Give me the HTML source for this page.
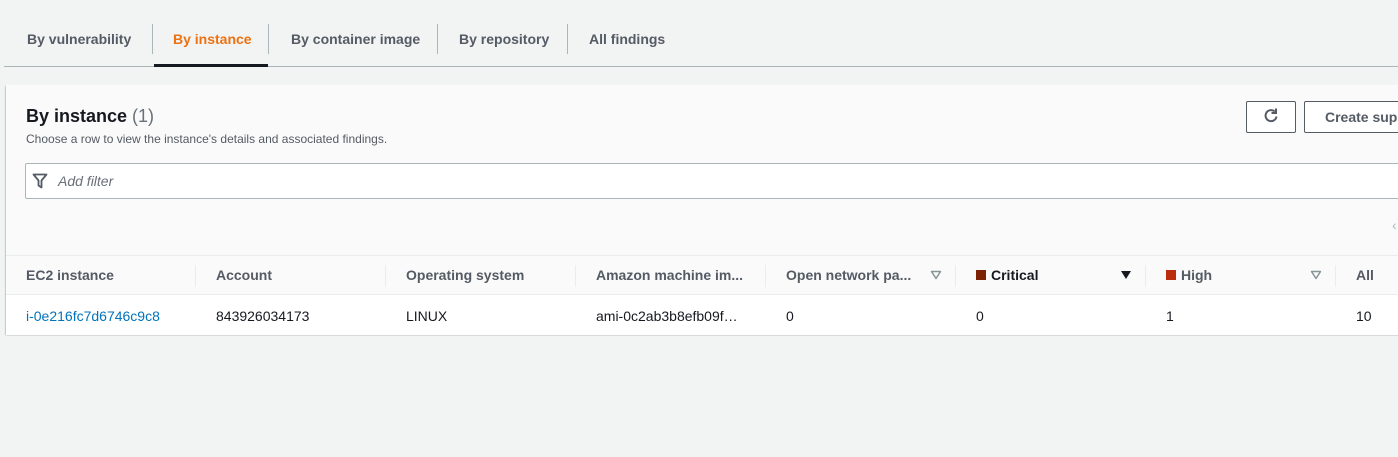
<!DOCTYPE html>
<html><head><style>
body{margin:0;width:1398px;height:457px;background:#f2f3f3;font-family:"Liberation Sans",sans-serif;overflow:hidden;position:relative;color:#16191f}
.tab{position:absolute;top:31px;font-size:14px;font-weight:bold;color:#545b64}
.sep{position:absolute;top:24px;width:1px;height:30px;background:#aab7b8}
.panel{position:absolute;left:6px;top:85px;width:1400px;height:249px;background:#fafafa;box-shadow:0 1px 1px rgba(0,28,36,.3),1px 1px 1px rgba(0,28,36,.15),-1px 1px 1px rgba(0,28,36,.15)}
.abs{position:absolute}
.th{position:absolute;top:267px;font-size:14px;font-weight:bold;color:#545b64}
.td{position:absolute;top:308px;font-size:14px;color:#16191f}
.cs{position:absolute;top:265px;width:1px;height:22px;background:#eaeded}
.tri{position:absolute;top:270px}
</style></head><body>
<div class="tab" style="left:27px">By vulnerability</div>
<div class="sep" style="left:152px"></div>
<div class="tab" style="left:173px;color:#ec7211">By instance</div>
<div class="sep" style="left:268px"></div>
<div class="tab" style="left:291px">By container image</div>
<div class="sep" style="left:437px"></div>
<div class="tab" style="left:459px">By repository</div>
<div class="sep" style="left:567px"></div>
<div class="tab" style="left:589px">All findings</div>
<div class="abs" style="left:4px;top:66px;width:1394px;height:1px;background:#aab7b8"></div>
<div class="abs" style="left:154px;top:64px;width:114px;height:3px;background:#16191f"></div>

<div class="panel"></div>
<div class="abs" style="left:26px;top:106px;font-size:18px;font-weight:bold">By instance <span style="font-weight:normal;color:#687078">(1)</span></div>
<div class="abs" style="left:26px;top:132px;font-size:12px;color:#545b64">Choose a row to view the instance's details and associated findings.</div>
<div class="abs" style="left:1246px;top:101px;width:48px;height:30px;border:1px solid #545b64;border-radius:2px;background:#fff"></div>
<svg class="abs" style="left:1261px;top:106px" width="20" height="20" viewBox="0 0 20 20"><path d="M15.5 10.5a5.5 5.5 0 1 1-1.8-5" fill="none" stroke="#545b64" stroke-width="2"/><path d="M15 2.5v4.5h-4.5" fill="none" stroke="#545b64" stroke-width="2"/></svg>
<div class="abs" style="left:1304px;top:101px;width:120px;height:30px;border:1px solid #545b64;border-radius:2px;background:#fff"></div>
<div class="abs" style="left:1325px;top:109px;font-size:14px;font-weight:bold;color:#545b64">Create sup</div>
<div class="abs" style="left:25px;top:163px;width:1400px;height:34px;border:1px solid #aab7b8;border-radius:2px;background:#fff"></div>
<svg class="abs" style="left:32px;top:173px" width="16" height="16" viewBox="0 0 16 16"><path d="M1.5 1.5h13l-5 6v7l-3-2v-5z" fill="none" stroke="#545b64" stroke-width="1.8" stroke-linejoin="round"/></svg>
<div class="abs" style="left:58px;top:173px;font-size:14px;font-style:italic;color:#687078">Add filter</div>
<div class="abs" style="left:1392px;top:217px;font-size:14px;color:#aab7b8">‹</div>
<div class="abs" style="left:6px;top:255px;width:1392px;height:1px;background:#eaeded"></div>
<div class="abs" style="left:6px;top:294px;width:1392px;height:40px;background:#fff;border-top:1px solid #eaeded"></div>

<div class="th" style="left:26px">EC2 instance</div>
<div class="cs" style="left:195px"></div>
<div class="th" style="left:216px">Account</div>
<div class="cs" style="left:385px"></div>
<div class="th" style="left:406px">Operating system</div>
<div class="cs" style="left:575px"></div>
<div class="th" style="left:596px">Amazon machine im...</div>
<div class="cs" style="left:765px"></div>
<div class="th" style="left:786px">Open network pa...</div>
<svg class="tri" style="left:930px" width="12" height="10"><path d="M1.5 1.5h9L6 8.5z" fill="none" stroke="#879596" stroke-width="1.5" stroke-linejoin="round"/></svg>
<div class="cs" style="left:955px"></div>
<div class="abs" style="left:976px;top:270px;width:10px;height:10px;background:#7d2105"></div>
<div class="th" style="left:991px;color:#16191f">Critical</div>
<svg class="tri" style="left:1120px" width="12" height="10"><path d="M1 1h10L6 9z" fill="#16191f"/></svg>
<div class="cs" style="left:1145px"></div>
<div class="abs" style="left:1166px;top:270px;width:10px;height:10px;background:#ba2e0f"></div>
<div class="th" style="left:1181px">High</div>
<svg class="tri" style="left:1310px" width="12" height="10"><path d="M1.5 1.5h9L6 8.5z" fill="none" stroke="#879596" stroke-width="1.5" stroke-linejoin="round"/></svg>
<div class="cs" style="left:1335px"></div>
<div class="th" style="left:1356px">All</div>

<div class="td" style="left:26px;color:#0073bb">i-0e216fc7d6746c9c8</div>
<div class="td" style="left:216px">843926034173</div>
<div class="td" style="left:406px">LINUX</div>
<div class="td" style="left:596px">ami-0c2ab3b8efb09f…</div>
<div class="td" style="left:786px">0</div>
<div class="td" style="left:976px">0</div>
<div class="td" style="left:1166px">1</div>
<div class="td" style="left:1356px">10</div>
</body></html>
